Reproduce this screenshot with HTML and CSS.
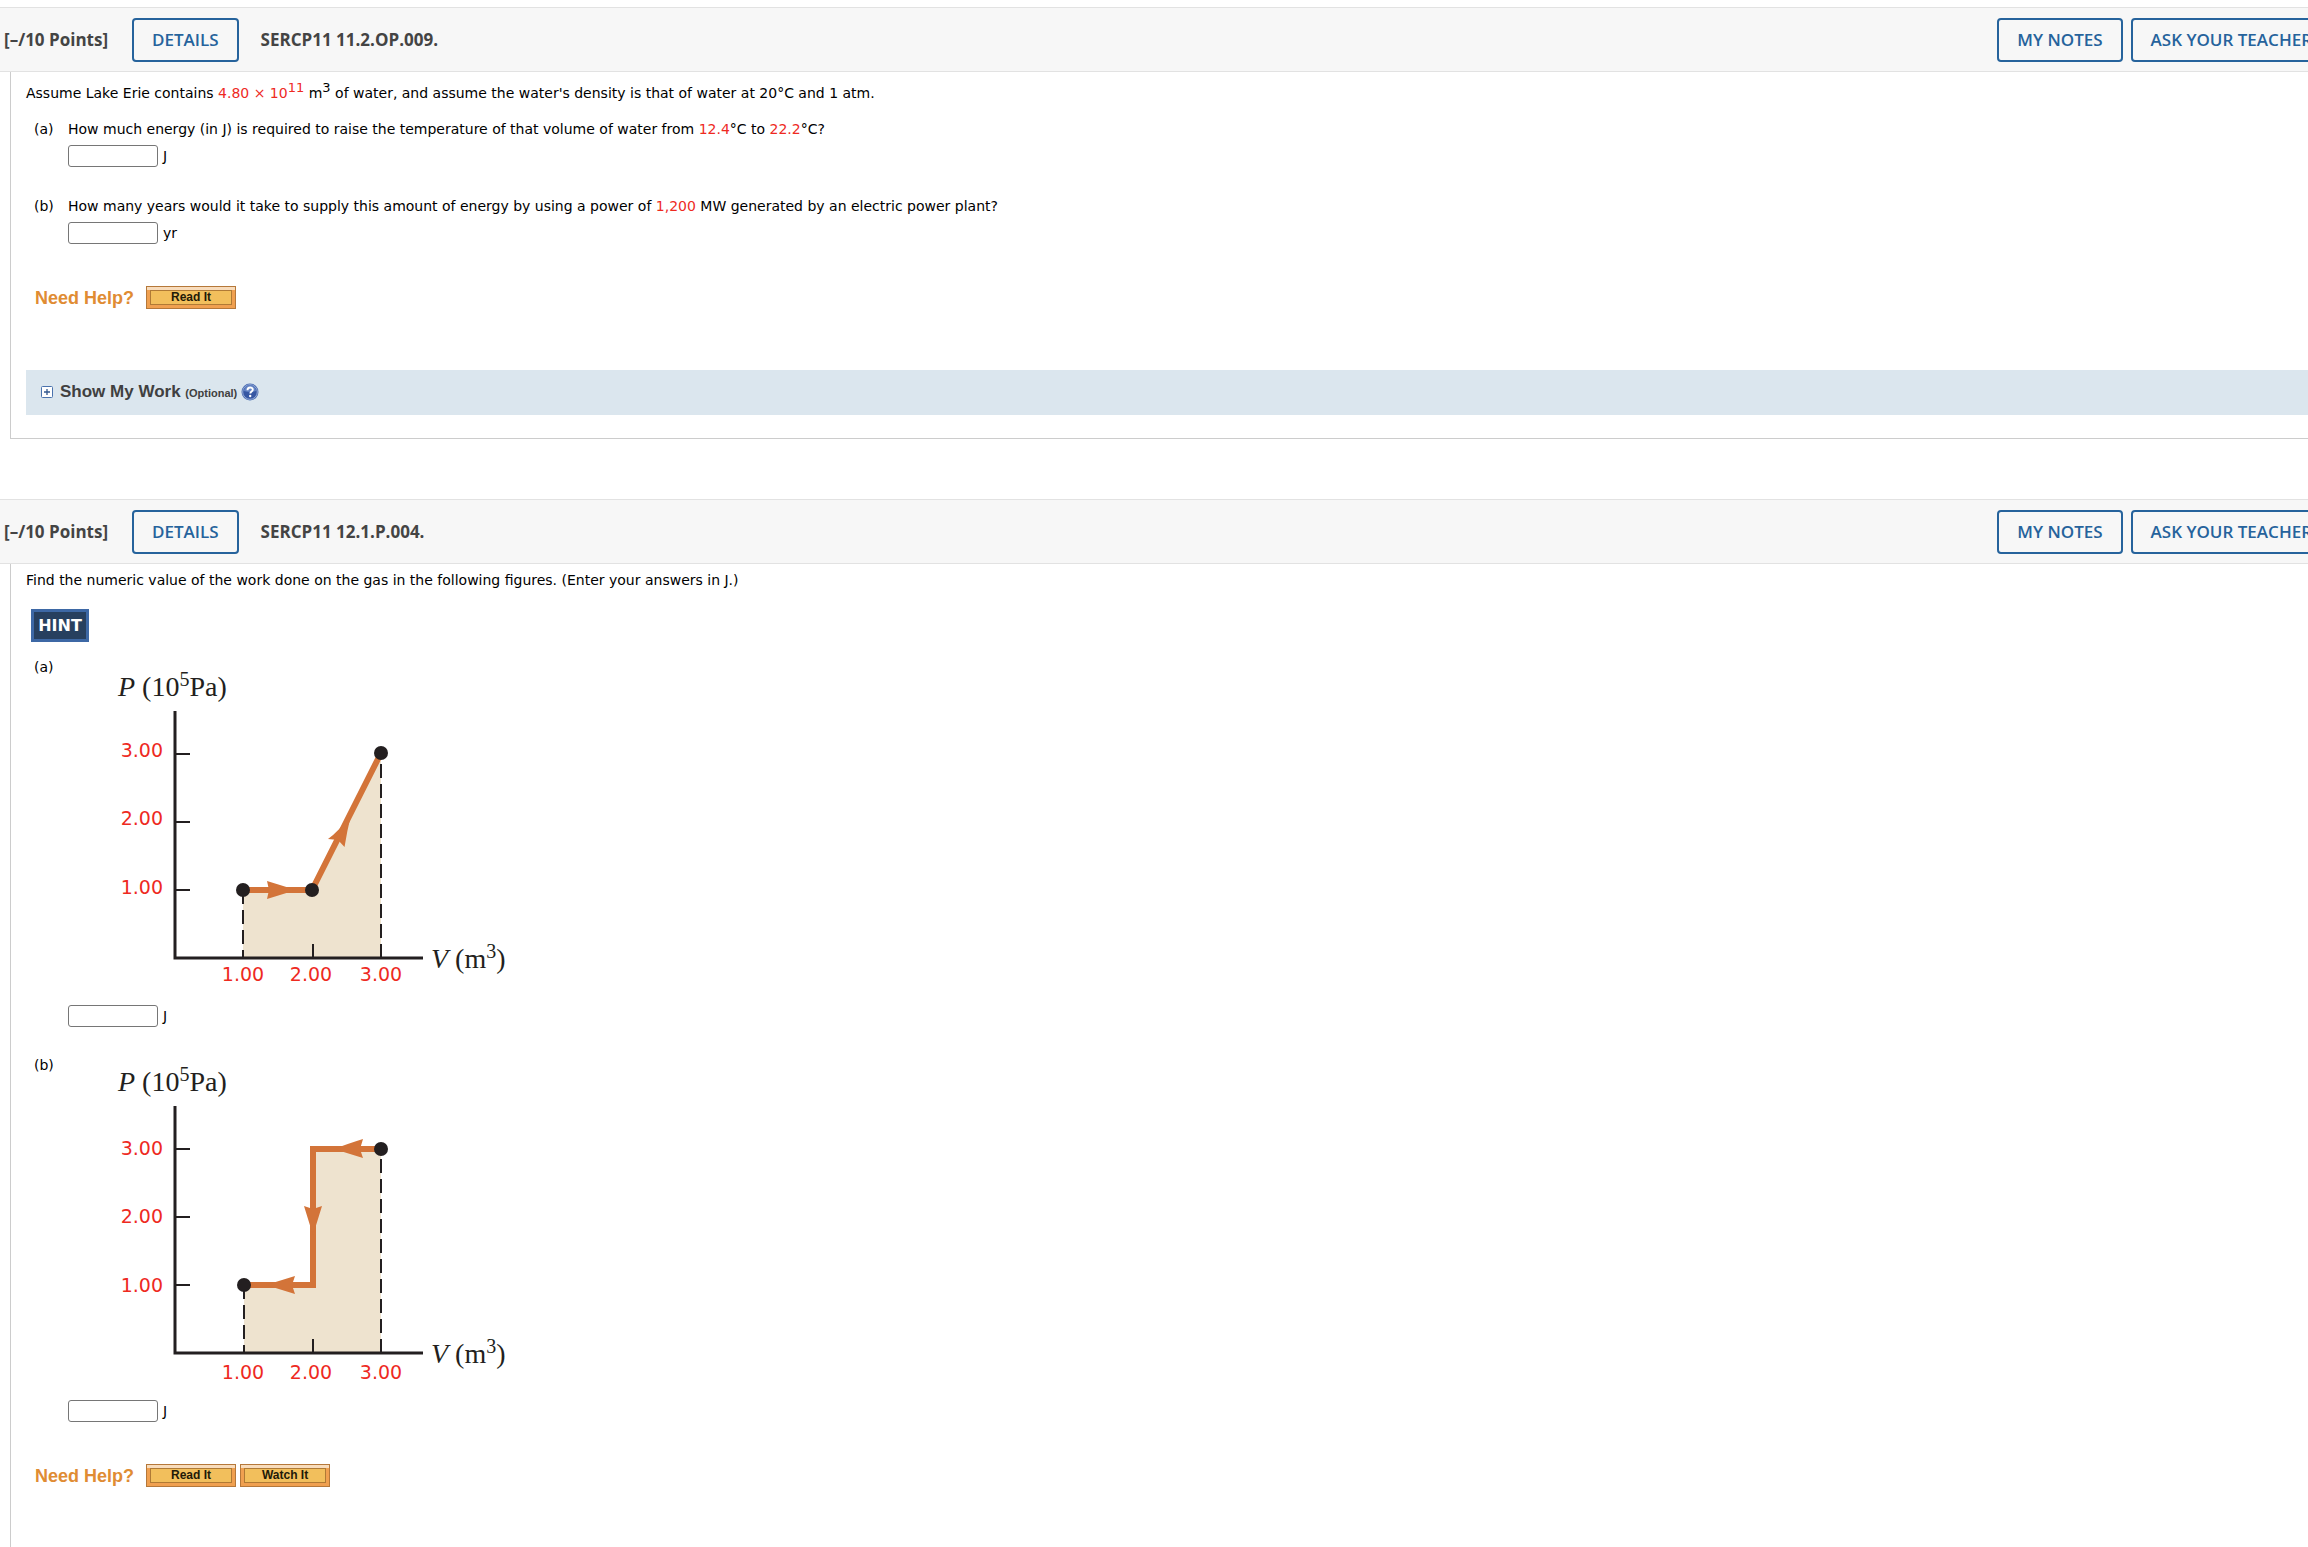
FILE: index.html
```html
<!DOCTYPE html>
<html lang="en">
<head>
  <meta charset="UTF-8" />
  <meta name="viewport" content="width=device-width, initial-scale=1.0" />
  <title>Homework</title>
  <link rel="stylesheet" href="styles.css">
</head>
<body>
  <section class="question">
    <div class="question-header">
      <span class="points">[–/10 Points]</span>
      <button class="header-btn details-btn">DETAILS</button>
      <span class="question-name">SERCP11 11.2.OP.009.</span>
      <div class="header-actions">
        <button class="header-btn">MY NOTES</button>
        <button class="header-btn">ASK YOUR TEACHER</button>
      </div>
    </div>
    <div class="question-body">
      <p>Assume Lake Erie contains <span class="rand">4.80 × 10<sup>11</sup></span> m<sup>3</sup> of water, and assume the water's density is that of water at 20°C and 1 atm.</p>
      <div class="parts">
        <span>(a)</span>
        <div>
          <label for="q1a">How much energy (in J) is required to raise the temperature of that volume of water from <span class="rand">12.4</span>°C to <span class="rand">22.2</span>°C?</label>
          <div class="answer"><input type="text" id="q1a"><span>J</span></div>
        </div>
        <span>(b)</span>
        <div>
          <label for="q1b">How many years would it take to supply this amount of energy by using a power of <span class="rand">1,200</span> MW generated by an electric power plant?</label>
          <div class="answer"><input type="text" id="q1b"><span>yr</span></div>
        </div>
      </div>
      <div class="need-help">
        <span>Need Help?</span>
        <button class="help-btn">Read It</button>
      </div>
      <div class="show-work">
        <button class="work-toggle">
          <svg width="12" height="12" viewBox="0 0 12 12">
            <rect x="0.5" y="0.5" width="11" height="11" rx="1" fill="#fff" stroke="#4a72ad"/>
            <path d="M3 6h6M6 3v6" stroke="#33588f" stroke-width="1.3"/>
          </svg>
          <span>Show My Work <small>(Optional)</small></span>
        </button>
        <a href="#" class="help-icon" aria-label="Help">
          <svg width="18" height="18" viewBox="0 0 18 18">
            <circle cx="9" cy="9" r="8.5" fill="#4a6cb3"/>
            <circle cx="9" cy="9" r="7.3" fill="#3657a3" stroke="#a9bde0" stroke-width="0.8"/>
            <path d="M3 8a6 6 0 0 1 12 0q-6 2-12 0z" fill="#6484c5"/>
            <path d="M6.5 7.2c0-3.6 5.3-3.4 5.3-.5 0 1.9-2.5 1.9-2.5 3.9" fill="none" stroke="#fff" stroke-width="1.9"/>
            <circle cx="9.2" cy="13" r="1.2" fill="#fff"/>
          </svg>
        </a>
      </div>
    </div>
  </section>

  <section class="question">
    <div class="question-header">
      <span class="points">[–/10 Points]</span>
      <button class="header-btn details-btn">DETAILS</button>
      <span class="question-name">SERCP11 12.1.P.004.</span>
      <div class="header-actions">
        <button class="header-btn">MY NOTES</button>
        <button class="header-btn">ASK YOUR TEACHER</button>
      </div>
    </div>
    <div class="question-body figures">
      <p>Find the numeric value of the work done on the gas in the following figures. (Enter your answers in J.)</p>
      <button class="hint-btn">HINT</button>
      <div class="parts">
        <label for="q2a">(a)</label>
        <div>
          <svg class="graph" width="420" height="342" viewBox="0 -3 420 342">
            <path class="area" d="M143 230H212L281 93V298H143z"/>
            <path class="axis" d="M75 51V298H323"/>
            <path class="tick" d="M75 94H90M75 162H90M75 230H90M213 284V298"/>
            <path class="drop drop-left" d="M143 298V230"/>
            <path class="drop" d="M281 298V93"/>
            <path class="process" d="M143 230H212L281 93"/>
            <path class="arrow" d="M167 221Q180 225 196 230Q180 235 167 239L169 230z"/>
            <path class="arrow" d="M251 155Q247 171 244.500 187L238 180L228 179Q239 171 251 155z"/>
            <circle cx="143" cy="230" r="7"/>
            <circle cx="212" cy="230" r="7"/>
            <circle cx="281" cy="93" r="7"/>
            <text class="axis-name" x="18" y="36"><tspan class="var">P</tspan> (10<tspan class="exp" dy="-10">5</tspan><tspan dy="10">Pa)</tspan></text>
            <text class="axis-name" x="331" y="308"><tspan class="var">V</tspan> (m<tspan class="exp" dy="-10">3</tspan><tspan dy="10">)</tspan></text>
            <text class="num" x="63" y="97" text-anchor="end">3.00</text>
            <text class="num" x="63" y="165" text-anchor="end">2.00</text>
            <text class="num" x="63" y="234" text-anchor="end">1.00</text>
            <text class="num" x="143" y="321" text-anchor="middle">1.00</text>
            <text class="num" x="211" y="321" text-anchor="middle">2.00</text>
            <text class="num" x="281" y="321" text-anchor="middle">3.00</text>
          </svg>
          <div class="answer"><input type="text" id="q2a"><span>J</span></div>
        </div>
        <label for="q2b">(b)</label>
        <div>
          <svg class="graph" width="420" height="339" viewBox="0 0 420 339">
            <path class="area" d="M144 230H213V94H281V298H144z"/>
            <path class="axis" d="M75 51V298H323"/>
            <path class="tick" d="M75 94H90M75 162H90M75 230H90M213 284V298"/>
            <path class="drop drop-left" d="M144 298V230"/>
            <path class="drop" d="M281 298V94"/>
            <path class="process" d="M281 94H213V230H144"/>
            <path class="arrow" d="M263 84Q250 88 234 94Q250 99 263 103L260 94z"/>
            <path class="arrow" d="M204 151Q208 164 213 180Q218 164 222 151L213 154z"/>
            <path class="arrow" d="M195 221Q182 225 166 230Q182 235 195 239L192 230z"/>
            <circle cx="281" cy="94" r="7"/>
            <circle cx="144" cy="230" r="7"/>
            <text class="axis-name" x="18" y="36"><tspan class="var">P</tspan> (10<tspan class="exp" dy="-10">5</tspan><tspan dy="10">Pa)</tspan></text>
            <text class="axis-name" x="331" y="308"><tspan class="var">V</tspan> (m<tspan class="exp" dy="-10">3</tspan><tspan dy="10">)</tspan></text>
            <text class="num" x="63" y="100" text-anchor="end">3.00</text>
            <text class="num" x="63" y="168" text-anchor="end">2.00</text>
            <text class="num" x="63" y="237" text-anchor="end">1.00</text>
            <text class="num" x="143" y="324" text-anchor="middle">1.00</text>
            <text class="num" x="211" y="324" text-anchor="middle">2.00</text>
            <text class="num" x="281" y="324" text-anchor="middle">3.00</text>
          </svg>
          <div class="answer"><input type="text" id="q2b"><span>J</span></div>
        </div>
      </div>
      <div class="need-help">
        <span>Need Help?</span>
        <button class="help-btn">Read It</button>
        <button class="help-btn">Watch It</button>
      </div>
    </div>
  </section>
</body>
</html>
```
FILE: styles.css
```css
* {
  box-sizing: border-box;
  margin: 0;
  padding: 0;
}
body {
  display: flex;
  flex-direction: column;
  min-height: 100vh;
  font-family: Verdana, "DejaVu Sans", sans-serif;
  font-size: 14px;
  line-height: 20px;
  color: #000;
  background: #fff;
  padding-top: 7px;
  overflow-x: hidden;
}
button {
  cursor: pointer;
}
.question {
  margin-bottom: 60px;
}
.question:last-child {
  display: flex;
  flex-direction: column;
  flex: 1;
  margin-bottom: 0;
}
.question-header {
  display: flex;
  align-items: center;
  height: 65px;
  /* the toolbar runs on past the right edge of the frame */
  margin-right: -24px;
  padding-left: 4px;
  background: #f7f7f7;
  border-top: 1px solid #e2e2e2;
  border-bottom: 1px solid #e2e2e2;
  font-family: "Open Sans", sans-serif;
  font-size: 17px;
  font-weight: 700;
  color: #444;
}
.header-btn {
  height: 44px;
  padding: 0 18px;
  border: 2px solid #26639c;
  border-radius: 4px;
  background: transparent;
  color: #26639c;
  font-family: inherit;
  font-size: 17px;
  font-weight: 600;
}
.details-btn {
  margin: 0 22px 0 24px;
}
.header-actions {
  display: flex;
  gap: 8px;
  margin-left: auto;
}
.question-body {
  margin-left: 10px;
  padding: 11px 0 23px 15px;
  border-left: 1px solid #ccc;
  border-bottom: 1px solid #ccc;
}
.figures {
  flex: 1;
  padding-top: 6px;
  border-bottom: none;
}
sup {
  font-size: 13px;
  line-height: 0;
}
.rand {
  color: #ee2a1f;
}
.parts {
  display: grid;
  grid-template-columns: 34px 1fr;
  row-gap: 29px;
  margin-top: 16px;
  padding-left: 8px;
}
.figures .parts {
  row-gap: 28px;
  margin-top: 15px;
}
.parts label {
  display: block;
}
.answer {
  display: flex;
  align-items: center;
  gap: 5px;
  margin-top: 6px;
}
.answer input {
  width: 90px;
  height: 22px;
  border: 1px solid #767676;
  border-radius: 3px;
  background: #fff;
}
.graph {
  display: block;
  margin-left: 32px;
}
.need-help {
  display: flex;
  align-items: center;
  gap: 4px;
  margin-top: 42px;
  padding-left: 9px;
  font-family: Arial, "Liberation Sans", sans-serif;
  font-size: 18px;
  font-weight: 700;
  color: #e08c33;
}
.need-help span {
  margin-right: 8px;
}
.help-btn {
  width: 90px;
  height: 23px;
  border: 1px solid #b5783a;
  background: #f2bf5c;
  box-shadow: inset 0 3px #f8dcbc, inset 0 0 0 3px #f0a050, inset 0 0 0 4px #b07a35;
  font-family: Arial, "Liberation Sans", sans-serif;
  font-size: 12px;
  font-weight: 700;
  line-height: 15px;
  color: #221a08;
}
.show-work {
  display: flex;
  align-items: center;
  gap: 4px;
  height: 45px;
  margin-top: 61px;
  padding: 0 15px 2px;
  background: #dbe6ee;
}
.work-toggle {
  display: flex;
  align-items: center;
  gap: 7px;
  border: none;
  background: none;
  font-family: Arial, "Liberation Sans", sans-serif;
  font-size: 17px;
  font-weight: 700;
  color: #404040;
}
.work-toggle small {
  font-size: 11px;
}
.help-icon svg {
  display: block;
}
.hint-btn {
  display: block;
  width: 58px;
  height: 33px;
  margin: 19px 0 0 5px;
  border: 3px solid #3d68a5;
  background: #27405f;
  color: #fff;
  font-family: Verdana, "DejaVu Sans", sans-serif;
  font-size: 16px;
  font-weight: 700;
}
.axis {
  fill: none;
  stroke: #231f20;
  stroke-width: 3;
}
.tick {
  stroke: #231f20;
  stroke-width: 2;
}
.drop {
  stroke: #231f20;
  stroke-width: 2;
  stroke-dasharray: 14 6;
}
.drop-left {
  stroke-dashoffset: 6;
}
.area {
  fill: #eee3cf;
}
.process {
  fill: none;
  stroke: #d37439;
  stroke-width: 6;
}
.arrow {
  fill: #d37439;
}
.graph circle {
  fill: #231f20;
}
.axis-name {
  font-family: "Liberation Serif", serif;
  font-size: 28px;
  fill: #231f20;
}
.var {
  font-style: italic;
}
.exp {
  font-size: 20px;
}
.num {
  font-size: 19px;
  fill: #ee2a1f;
}
```
